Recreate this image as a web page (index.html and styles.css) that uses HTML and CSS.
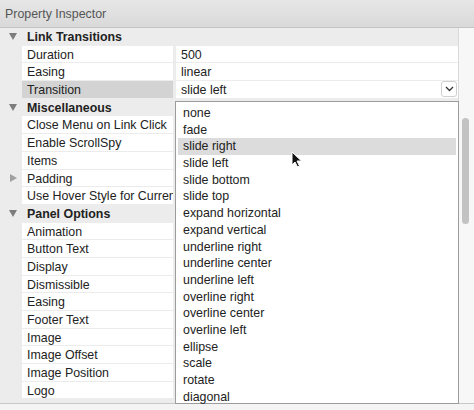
FILE: index.html
```html
<!DOCTYPE html>
<html lang="en">
  <head>
    <meta charset="UTF-8" />
    <title>Property Inspector</title>
    <link rel="stylesheet" href="styles.css">
  </head>

  <body>
    <div class="window">
      <div class="titlebar">Property Inspector</div>

      <div class="panel">
        <div class="rows">
          <div class="row group">
            <span class="toggle open"></span>
            <div class="label">Link Transitions</div>
          </div>
          <div class="row">
            <span class="toggle"></span>
            <div class="label">Duration</div>
            <div class="value">500</div>
          </div>
          <div class="row">
            <span class="toggle"></span>
            <div class="label">Easing</div>
            <div class="value">linear</div>
          </div>
          <div class="row selected">
            <span class="toggle"></span>
            <div class="label">Transition</div>
            <div class="value">
              slide left
              <span class="select-btn">
                <svg width="9" height="6" viewBox="0 0 9 6">
                  <path d="M1 1 L4.5 4.5 L8 1" fill="none" stroke="#333" stroke-width="1.3" />
                </svg>
              </span>
            </div>
          </div>
          <div class="row group">
            <span class="toggle open"></span>
            <div class="label">Miscellaneous</div>
          </div>
          <div class="row">
            <span class="toggle"></span>
            <div class="label">Close Menu on Link Click</div>
            <div class="value"></div>
          </div>
          <div class="row">
            <span class="toggle"></span>
            <div class="label">Enable ScrollSpy</div>
            <div class="value"></div>
          </div>
          <div class="row">
            <span class="toggle"></span>
            <div class="label">Items</div>
            <div class="value"></div>
          </div>
          <div class="row">
            <span class="toggle closed"></span>
            <div class="label">Padding</div>
            <div class="value"></div>
          </div>
          <div class="row">
            <span class="toggle"></span>
            <div class="label">Use Hover Style for Current</div>
            <div class="value"></div>
          </div>
          <div class="row group">
            <span class="toggle open"></span>
            <div class="label">Panel Options</div>
          </div>
          <div class="row">
            <span class="toggle"></span>
            <div class="label">Animation</div>
            <div class="value"></div>
          </div>
          <div class="row">
            <span class="toggle"></span>
            <div class="label">Button Text</div>
            <div class="value"></div>
          </div>
          <div class="row">
            <span class="toggle"></span>
            <div class="label">Display</div>
            <div class="value"></div>
          </div>
          <div class="row">
            <span class="toggle"></span>
            <div class="label">Dismissible</div>
            <div class="value"></div>
          </div>
          <div class="row">
            <span class="toggle"></span>
            <div class="label">Easing</div>
            <div class="value"></div>
          </div>
          <div class="row">
            <span class="toggle"></span>
            <div class="label">Footer Text</div>
            <div class="value"></div>
          </div>
          <div class="row">
            <span class="toggle"></span>
            <div class="label">Image</div>
            <div class="value"></div>
          </div>
          <div class="row">
            <span class="toggle"></span>
            <div class="label">Image Offset</div>
            <div class="value"></div>
          </div>
          <div class="row">
            <span class="toggle"></span>
            <div class="label">Image Position</div>
            <div class="value"></div>
          </div>
          <div class="row">
            <span class="toggle"></span>
            <div class="label">Logo</div>
            <div class="value"></div>
          </div>
        </div>

        <div class="scrollbar">
          <div class="thumb"></div>
        </div>

        <ul class="dropdown">
          <li>none</li>
          <li>fade</li>
          <li class="hover">slide right</li>
          <li>slide left</li>
          <li>slide bottom</li>
          <li>slide top</li>
          <li>expand horizontal</li>
          <li>expand vertical</li>
          <li>underline right</li>
          <li>underline center</li>
          <li>underline left</li>
          <li>overline right</li>
          <li>overline center</li>
          <li>overline left</li>
          <li>ellipse</li>
          <li>scale</li>
          <li>rotate</li>
          <li>diagonal</li>
        </ul>

        <svg class="cursor" width="12" height="17" viewBox="0 0 12 17">
          <path d="M1 1 L1 14 L4 11 L6.5 16 L8.5 15 L6 10 L10.5 10 Z" fill="#111" stroke="#fff" stroke-width="1" stroke-linejoin="round" />
        </svg>
      </div>
    </div>
  </body>
</html>
```

FILE: styles.css
```css
body {
  margin: 0;
  background-color: #f4f4f4;
  font-family: 'Liberation Sans', Arial, sans-serif;
  font-size: 12.4px;
  color: #222;
}

.window {
  width: 474px;
  height: 410px;
  overflow: hidden;
}

.titlebar {
  height: 27px;
  line-height: 28px;
  padding-left: 5px;
  color: #555;
  background: linear-gradient(#e7e7e7, #d9d9d9);
  border-bottom: 1px solid #c4c4c4;
}

.panel {
  position: relative;
  display: flex;
  height: 375px;
  background-color: #ececec;
  border-bottom: 1px solid #c8c8c8;
}

.rows {
  flex: 1;
  overflow: hidden;
}

.row {
  display: flex;
  height: 16.7px;
  line-height: 18.5px;
  border-bottom: 1px solid #ececec;
  white-space: nowrap;
}

.toggle {
  position: relative;
  width: 22px;
  flex: none;
}

.toggle.open::before {
  content: '';
  position: absolute;
  left: 9px;
  top: 5px;
  border-left: 4px solid transparent;
  border-right: 4px solid transparent;
  border-top: 7px solid #7d7d7d;
}

.toggle.closed::before {
  content: '';
  position: absolute;
  left: 10px;
  top: 4px;
  border-top: 4px solid transparent;
  border-bottom: 4px solid transparent;
  border-left: 7px solid #a0a0a0;
}

.label {
  width: 151px;
  flex: none;
  padding-left: 5px;
  box-sizing: border-box;
  overflow: hidden;
  background-color: #fff;
}

.value {
  position: relative;
  flex: 1;
  margin-left: 3px;
  padding-left: 5px;
  background-color: #fff;
}

.group .label {
  font-weight: bold;
  background-color: transparent;
}

.selected .label {
  background-color: #d3d3d3;
}

.select-btn {
  position: absolute;
  right: 1px;
  top: 0;
  width: 16px;
  height: 16px;
  display: flex;
  justify-content: center;
  align-items: center;
  border: 1px solid #d0d0d0;
  border-radius: 3px;
  background-color: #fff;
  box-sizing: border-box;
}

.scrollbar {
  width: 15px;
  flex: none;
  background-color: #f7f7f7;
  border-left: 1px solid #dadada;
}

.thumb {
  width: 7px;
  height: 106px;
  margin: 90px 0 0 3px;
  border-radius: 4px;
  background-color: #c2c2c2;
}

.dropdown {
  position: absolute;
  left: 175px;
  top: 73px;
  width: 284px;
  height: 303px;
  margin: 0;
  padding: 3px 2px 0 2px;
  box-sizing: border-box;
  list-style: none;
  background-color: #fff;
  border: 1px solid #9c9c9c;
}

.dropdown li {
  height: 16.7px;
  line-height: 17px;
  padding-left: 5px;
}

.dropdown li.hover {
  background-color: #dcdcdc;
}

.cursor {
  position: absolute;
  left: 291px;
  top: 123px;
}
```
